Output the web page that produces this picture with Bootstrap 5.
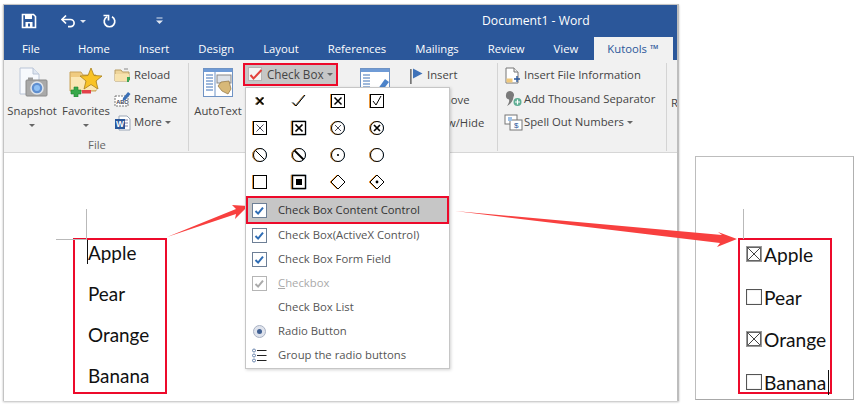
<!DOCTYPE html>
<html lang="en">
<head>
<meta charset="utf-8">
<title>Document1 - Word</title>
<link href="https://cdn.jsdelivr.net/npm/bootstrap@5.3.0/dist/css/bootstrap.min.css" rel="stylesheet">
<style>
html,body{margin:0;background:#fff;overflow:hidden}
body{font-family:"Open Sans","Noto Sans",sans-serif;font-size:11.3px;color:#444}
.stage{position:relative;width:858px;height:406px;overflow:hidden}
.wordwin{width:676px;height:397px;margin:4px 0 0 3px;border:1px solid #c4c4c4;border-right:2px solid #bdbdbd;box-shadow:0 1px 2px #bbb}
.titlebar{height:32px;background:#2b579a;color:#fff}
.qat{width:420px;padding-left:17px}
.qat svg{display:block}
.doc-title{font-size:12.2px;margin-left:58px}
.tabrow{height:23px;background:#2b579a;color:#fff;padding:1px 0 0 18px;gap:29px;font-size:11.3px}
.tab-file{margin-right:9px}
.tab-on{margin:-1px 0 0 -13px;background:#f1f1f1;color:#2b579a;padding:1px 13px 0;height:23px;width:79px;white-space:nowrap}
.ribbon{height:93px;background:#f1f1f1;border-bottom:1px solid #d6d6d6}
.rgroup{height:88px;border-right:1px solid #d4d4d4;margin-top:3px;flex:none}
.bigbtn{width:52px;flex:none;padding-top:4px;text-align:center;line-height:16px}
.bigbtn svg{display:block;margin:0 auto 6px}
.bigbtn .tri{display:block;margin:5px auto 0}
.btn-fav{margin-left:2px}
.tri{display:inline-block;width:0;height:0;border:3px solid transparent;border-top:3.5px solid #666;border-bottom:0;vertical-align:middle;margin-left:3px}
.smallstack{padding-top:1px}
.smallrow{height:23.5px;padding-left:2px;white-space:nowrap}
.smallrow svg{flex:none;margin-right:3px}
.smallrow svg.tight{margin-right:1px}
.group-label{text-align:center;color:#666;line-height:14px;margin-top:3px}
.g-file{width:185px;padding-left:2px}
.g-main{width:309px;padding-left:3px}
.g-kt{width:169px;padding-left:5px}
.chk-out{width:95px;height:23px;background:#c6c6c6;border:2px solid #ed0a2b;padding-left:3px;font-size:11.7px;white-space:nowrap}
.col-cb{width:95px;margin-left:-1px}
.col-big2{margin-left:11px}
.col-ins{margin-left:9px}
.rtail{width:12px;line-height:86px;padding-left:4px;overflow:hidden}
.docarea{height:248px;background:#fff;position:relative;padding:85px 0 0 69px}
.redbox{width:94px;height:156px;border:2px solid #ed0a2b}
.doctext{font-family:"Lato","Open Sans",sans-serif;font-size:18.9px;color:#111;line-height:20px}
.left-list{padding:2.500px 0 0 13px}
.left-list div{height:41.3px}
.caret-mark{position:absolute;background:#111;width:1px}
.crop{position:absolute;background:#b9b9b9}
.pagebox{position:relative;width:159px;height:244px;margin:156px 0 0 16px;border:1px solid #bdbdbd;border-right-color:#b0b0b0;border-bottom-color:#a8a8a8;padding:81px 0 0 42px;background:#fff}
.right-list{padding:5px 0 0 6px;font-size:19.2px}
.right-list div{height:42.6px;display:flex;align-items:flex-start;gap:2px;white-space:nowrap}
.right-list svg{margin-top:1px;flex:none}
.menu-drop{display:block;position:absolute;left:245px;top:87px;width:205px;height:282px;background:#fff;border:1px solid #c6c6c6;border-radius:0;padding:0;margin:0;box-shadow:1px 1px 3px rgba(0,0,0,.18);font-size:11.3px;min-width:0}
.symgrid{display:grid;grid-template-columns:repeat(4,16px);grid-auto-rows:16px;column-gap:23px;row-gap:11px;padding:5px 0 0 6px;height:111px}
.sym{filter:drop-shadow(-.7px 0 0 #e8963a) drop-shadow(.7px 0 0 #4aa3ee)}
.menu-drop .dropdown-item{display:flex;align-items:center;height:24px;padding:0 0 0 6px;gap:11px;color:#555;font-size:11.3px;background:none;width:auto}
.menu-drop .dropdown-item svg{flex:none}
.menu-drop .dropdown-item.picked{height:28px;margin:-3px 0 -1px;background:#c6c6c6;border:2px solid #ed0a2b;padding-left:4px;color:#333}
.menu-drop .dropdown-item.disabled{color:#aaa}
.arrows{position:absolute;left:0;top:0;pointer-events:none}
</style>
</head>
<body>
<svg width="0" height="0" class="position-absolute">
<defs>
<symbol id="cb" viewBox="0 0 15 15"><rect x=".5" y=".5" width="14" height="14" fill="#fff" stroke="#6d7f96"/><path d="M3.5 8l2.6 2.6L11 4.6" fill="none" stroke="#2f6db5" stroke-width="2"/></symbol>
<symbol id="bx" viewBox="0 0 16 16"><rect x="1.5" y="1.5" width="13" height="13" fill="#fff" stroke="#000"/></symbol>
<symbol id="ci" viewBox="0 0 16 16"><circle cx="8" cy="8" r="6.5" fill="#fff" stroke="#000"/></symbol>
</defs>
</svg>
<div class="stage d-flex align-items-start">
  <div class="wordwin flex-none">
    <div class="titlebar d-flex align-items-center">
      <div class="qat d-flex align-items-center">
        <svg width="16" height="16" viewBox="0 0 16 16" class="me-3"><path d="M1.5 1.5h11l2 2v11h-13z" fill="none" stroke="#fff" stroke-width="1.6"/><rect x="4" y="2" width="7" height="4" fill="#fff"/><rect x="4.5" y="9" width="7" height="5" fill="#fff"/><rect x="7" y="10.5" width="2" height="3" fill="#2b579a"/></svg>
        <svg width="15" height="14" viewBox="0 0 15 14" class="ms-2"><path d="M1.500 5.500h8a3.600 3.600 0 0 1 0 7.200H7" fill="none" stroke="#fff" stroke-width="1.700"/><path d="M5 1.500L1 5.500l4 4" fill="none" stroke="#fff" stroke-width="1.700"/></svg>
        <span class="tri ms-1" style="border-top-color:#dfe6f1"></span>
        <svg width="15" height="15" viewBox="0 0 15 15" class="ms-3"><path d="M10 2.800a5.300 5.300 0 1 1-5 0" fill="none" stroke="#fff" stroke-width="1.700"/><path d="M1.500 1.500h5v5" fill="none" stroke="#fff" stroke-width="1.700"/></svg>
        <svg width="9" height="8" viewBox="0 0 9 8" style="margin-left:38px"><path d="M1.500 1h6" stroke="#dfe6f1"/><path d="M1 3.500h7L4.500 7z" fill="#dfe6f1"/></svg>
      </div>
      <div class="doc-title">Document1 - Word</div>
    </div>
    <div class="tabrow d-flex align-items-center">
      <span class="tab-file">File</span><span>Home</span><span>Insert</span><span>Design</span><span>Layout</span><span>References</span><span>Mailings</span><span>Review</span><span>View</span>
      <span class="tab-on d-flex align-items-center">Kutools ™</span>
    </div>
    <div class="ribbon d-flex">
      <div class="rgroup g-file">
        <div class="d-flex" style="height:72px">
          <div class="bigbtn">
            <svg width="32" height="30" viewBox="0 0 32 30"><path d="M4 1h13l6 6v20H4z" fill="#f7f9fd" stroke="#b9c4d6"/><path d="M17 1v6h6" fill="#dfe6f1" stroke="#b9c4d6"/><rect x="10" y="13" width="21" height="16" rx="1" fill="#a9a9a9" stroke="#8a8a8a"/><rect x="12" y="10.500" width="5" height="3" fill="#9a9a9a"/><circle cx="21" cy="21" r="6" fill="#5f8fd0" stroke="#dfe4ea" stroke-width="1.500"/><circle cx="21" cy="21" r="3" fill="#8fc0f4"/></svg>
            Snapshot
            <span class="tri"></span>
          </div>
          <div class="bigbtn btn-fav">
            <svg width="34" height="30" viewBox="0 0 34 30"><path d="M1 5h11l2 3h13v16H1z" fill="#f0cb80" stroke="#c9a45c"/><path d="M2 10h25v13H2z" fill="#fbe7b4"/><path d="M22 1l3 7.500 8 .5-6 5 2 8-7-4.500-7 4.500 2-8-6-5 8-.5z" fill="#f9c326" stroke="#a8801a" stroke-width=".8"/><path d="M5 20h4v3h3v4H9v3H5v-3H2v-4h3z" fill="#38a84a" stroke="#1f7f30" stroke-width=".6"/><rect x="13" y="23" width="9" height="3.500" fill="#e2424a"/></svg>
            Favorites
            <span class="tri"></span>
          </div>
          <div class="d-flex flex-column smallstack">
            <div class="smallrow d-flex align-items-center"><svg width="17" height="15" viewBox="0 0 17 15"><path d="M1 2h6l1.500 2H15v9H1z" fill="#eed59c" stroke="#b99d62"/><path d="M1 6h14v7H1z" fill="#f7e2ad"/><path d="M10 1h4" stroke="#888"/><path d="M13 9h3v3h-1v2h-2z" fill="#3aa655"/></svg>Reload</div>
            <div class="smallrow d-flex align-items-center"><svg width="17" height="16" viewBox="0 0 17 16"><rect x="1" y="5" width="13" height="10" fill="#fff" stroke="#777" stroke-dasharray="2 1"/><text x="2.200" y="13" font-family="Liberation Sans" font-size="5.600" font-weight="700" fill="#445">ABC</text><path d="M9 7l5-6 2.500 2-5 6-3 1z" fill="#3a6fb5"/></svg>Rename</div>
            <div class="smallrow d-flex align-items-center"><svg width="17" height="16" viewBox="0 0 17 16"><path d="M5 1h8l3 3v11H5z" fill="#fff" stroke="#9aa5b5"/><path d="M11 5h3M11 8h3M11 11h3" stroke="#88a" /><rect x="1" y="4" width="10" height="10" fill="#2b579a"/><text x="2" y="12.300" font-family="Liberation Sans" font-size="8.500" font-weight="700" fill="#fff">W</text></svg>More<span class="tri"></span></div>
          </div>
        </div>
        <div class="group-label">File</div>
      </div>
      <div class="rgroup g-main d-flex">
        <div class="bigbtn">
          <svg width="30" height="30" viewBox="0 0 30 30"><rect x=".5" y="1.500" width="29" height="28" fill="#fff" stroke="#6f93c4"/><rect x="1" y="2" width="28" height="3" fill="#6f9bd6"/><path d="M3 8h7M3 11h7M3 14h7M3 17h7M3 20h7M3 23h7" stroke="#3f72b8"/><path d="M12 5v24" stroke="#6f93c4"/><rect x="14" y="8" width="14" height="8" fill="#dfe3e8" stroke="#888"/><path d="M18 15l8-1 2 8-3 5-6-3-4-5z" fill="#d7b878" stroke="#8f7340" stroke-width=".7"/></svg>
          AutoText
        </div>
        <div class="col-cb d-flex flex-column">
          <div class="chk-out d-flex align-items-center"><svg width="15" height="15" viewBox="0 0 15 15" class="me-1"><rect x=".5" y=".5" width="13" height="13" fill="#f4f4f4" stroke="#b5b5b5"/><path d="M2.500 8l3 3.500L13.500 3" fill="none" stroke="#e2413c" stroke-width="2"/></svg>Check Box<span class="tri"></span></div>
        </div>
        <div class="bigbtn col-big2">
          <svg width="30" height="30" viewBox="0 0 30 30"><rect x=".5" y="1.500" width="29" height="28" fill="#fff" stroke="#6f93c4"/><rect x="1" y="2" width="28" height="3" fill="#6f9bd6"/><path d="M3 8h7M3 11h7M3 14h7M3 17h7M3 20h7" stroke="#3f72b8"/><path d="M15 26l10-14 4 3-10 13z" fill="#4c83c9"/></svg>
        </div>
        <div class="col-ins d-flex flex-column smallstack">
          <div class="smallrow d-flex align-items-center" style="padding-left:0"><svg width="14" height="16" viewBox="0 0 14 16"><rect x="0" y="1" width="1.700" height="15" fill="#777"/><path d="M3 .5l9.500 5L3 10.500z" fill="#3f72b8"/></svg>Insert</div>
          <div class="smallrow" style="padding-left:17px;line-height:23.5px">Remove</div>
          <div class="smallrow" style="padding-left:17px;line-height:23.5px">Show/Hide</div>
        </div>
      </div>
      <div class="rgroup g-kt d-flex flex-column smallstack">
        <div class="smallrow d-flex align-items-center"><svg width="16" height="17" viewBox="0 0 16 17"><path d="M1 1h8l4 4v11H1z" fill="#fff" stroke="#777"/><path d="M9 1v4h4" fill="#eee" stroke="#777"/><path d="M1.500 11.500h6v4h-6z" fill="#f0c87a"/><path d="M12 9v6M9 12h6" stroke="#2b579a" stroke-width="1.400"/></svg>Insert File Information</div>
        <div class="smallrow d-flex align-items-center"><svg class="tight" width="18" height="16" viewBox="0 0 18 16"><path d="M1 4a4 4 0 1 1 7.500 2C8 10 6 13 2 15c2-3 2.500-5 2-6.500A4 4 0 0 1 1 4z" fill="#7a7a7a"/><circle cx="12.500" cy="11" r="4" fill="#5fae94"/><path d="M12.500 8.500v5M10 11h5" stroke="#fff" stroke-width="1.200"/></svg>Add Thousand Separator</div>
        <div class="smallrow d-flex align-items-center" style="margin-left:-1px"><svg class="tight" width="19" height="17" viewBox="0 0 19 17"><rect x="1" y="1" width="12" height="9" fill="#fff" stroke="#777"/><rect x="6" y="6" width="12" height="10" fill="#fff" stroke="#777"/><rect x="4" y="3" width="4" height="4" fill="#9cc0e8"/><text x="10" y="14" font-family="Liberation Sans" font-size="8" fill="#2b579a">$</text></svg>Spell Out Numbers<span class="tri"></span></div>
      </div>
      <div class="rtail">R</div>
    </div>
    <div class="docarea">
      <span class="crop" style="left:52px;top:86px;width:31px;height:1px"></span>
      <span class="crop" style="left:82px;top:56px;width:1px;height:30px"></span>
      <div class="redbox doctext left-list">
        <div>Apple</div><div>Pear</div><div>Orange</div><div>Banana</div>
      </div>
      <span class="caret-mark" style="left:83px;top:87px;height:24px"></span>
    </div>
  </div>
  <div class="pagebox">
    <span class="crop" style="left:47px;top:52px;width:1px;height:30px"></span>
    <div class="redbox doctext right-list">
      <div><svg width="16" height="16" viewBox="0 0 15 15"><rect x=".5" y=".5" width="14" height="14" fill="#fff" stroke="#9a9a9a"/><rect x="1.500" y="1.500" width="12" height="12" fill="none" stroke="#333" stroke-width=".7"/><path d="M2 2l11 11M13 2L2 13" stroke="#222" stroke-width=".8"/></svg>Apple</div>
      <div><svg width="16" height="16" viewBox="0 0 15 15"><rect x=".5" y=".5" width="14" height="14" fill="#fff" stroke="#555"/></svg>Pear</div>
      <div><svg width="16" height="16" viewBox="0 0 15 15"><rect x=".5" y=".5" width="14" height="14" fill="#fff" stroke="#9a9a9a"/><rect x="1.500" y="1.500" width="12" height="12" fill="none" stroke="#333" stroke-width=".7"/><path d="M2 2l11 11M13 2L2 13" stroke="#222" stroke-width=".8"/></svg>Orange</div>
      <div><svg width="16" height="16" viewBox="0 0 15 15"><rect x=".5" y=".5" width="14" height="14" fill="#fff" stroke="#555"/></svg>Banana</div>
    </div>
    <span class="caret-mark" style="left:132px;top:213px;height:25px"></span>
  </div>
  <div class="dropdown-menu menu-drop">
    <div class="symgrid">
      <svg class="sym" width="16" height="16" viewBox="0 0 16 16"><path d="M4.500 4.500l7 7M11.500 4.500l-7 7" stroke="#000" stroke-width="1.500"/></svg>
      <svg class="sym" width="16" height="16" viewBox="0 0 16 16"><path d="M2 9.500l3 3.500 9-11" fill="none" stroke="#000"/></svg>
      <svg class="sym" width="16" height="16" viewBox="0 0 16 16"><use href="#bx"/><path d="M4.500 4.500l7 7M11.500 4.500l-7 7" stroke="#000" stroke-width="1.500"/></svg>
      <svg class="sym" width="16" height="16" viewBox="0 0 16 16"><use href="#bx"/><path d="M4 8l3 4 5-9" fill="none" stroke="#000"/></svg>
      <svg class="sym" width="16" height="16" viewBox="0 0 16 16"><use href="#bx"/><path d="M4.500 4.500l7 7M11.500 4.500l-7 7" stroke="#334" stroke-width=".9"/></svg>
      <svg class="sym" width="16" height="16" viewBox="0 0 16 16"><rect x="1.500" y="1.500" width="13" height="13" fill="#fff" stroke="#000" stroke-width="1.300"/><path d="M4.500 4.500l7 7M11.500 4.500l-7 7" stroke="#000" stroke-width="1.700"/></svg>
      <svg class="sym" width="16" height="16" viewBox="0 0 16 16"><use href="#ci"/><path d="M5 5l6 6M11 5l-6 6" stroke="#334" stroke-width=".9"/></svg>
      <svg class="sym" width="16" height="16" viewBox="0 0 16 16"><use href="#ci"/><path d="M5 5l6 6M11 5l-6 6" stroke="#000" stroke-width="1.700"/></svg>
      <svg class="sym" width="16" height="16" viewBox="0 0 16 16"><use href="#ci"/><path d="M3.500 3.500l9 9" stroke="#000"/></svg>
      <svg class="sym" width="16" height="16" viewBox="0 0 16 16"><use href="#ci"/><path d="M3.500 3.500l9 9" stroke="#000" stroke-width="1.800"/></svg>
      <svg class="sym" width="16" height="16" viewBox="0 0 16 16"><use href="#ci"/><circle cx="8" cy="8" r="1.100" fill="#000"/></svg>
      <svg class="sym" width="16" height="16" viewBox="0 0 16 16"><use href="#ci"/></svg>
      <svg class="sym" width="16" height="16" viewBox="0 0 16 16"><use href="#bx"/></svg>
      <svg class="sym" width="16" height="16" viewBox="0 0 16 16"><rect x="1.500" y="1.500" width="13" height="13" fill="#fff" stroke="#000" stroke-width="1.400"/><rect x="5" y="5" width="6" height="6" fill="#000"/></svg>
      <svg class="sym" width="16" height="16" viewBox="0 0 16 16"><path d="M8 1l7 7-7 7-7-7z" fill="#fff" stroke="#000"/></svg>
      <svg class="sym" width="16" height="16" viewBox="0 0 16 16"><path d="M8 1l7 7-7 7-7-7z" fill="#fff" stroke="#000"/><circle cx="8" cy="8" r="1.400" fill="#000"/></svg>
    </div>
    <a class="dropdown-item picked" href="#"><svg width="15" height="15"><use href="#cb"/></svg>Check Box Content Control</a>
    <a class="dropdown-item" href="#"><svg width="15" height="15"><use href="#cb"/></svg>Check Box(ActiveX Control)</a>
    <a class="dropdown-item" href="#"><svg width="15" height="15"><use href="#cb"/></svg>Check Box Form Field</a>
    <a class="dropdown-item disabled" href="#"><svg width="15" height="15" viewBox="0 0 15 15"><rect x=".5" y=".5" width="14" height="14" fill="#fff" stroke="#b5b5b5"/><path d="M3.500 8l2.600 2.600L11 4.600" fill="none" stroke="#aaa" stroke-width="2"/></svg><span><u>C</u>heckbox</span></a>
    <a class="dropdown-item" href="#"><svg width="15" height="15"></svg>Check Box List</a>
    <a class="dropdown-item" href="#"><svg width="15" height="15" viewBox="0 0 15 15"><circle cx="7.500" cy="7.500" r="6" fill="#dfe3ec" stroke="#a9b2c4"/><circle cx="7.500" cy="7.500" r="2.500" fill="#3f5f92"/></svg>Radio Button</a>
    <a class="dropdown-item" href="#"><svg width="15" height="15" viewBox="0 0 15 15"><circle cx="2" cy="2.500" r="1.500" fill="#fff" stroke="#4a6a9a" stroke-width=".8"/><circle cx="2" cy="7.500" r="1.500" fill="#fff" stroke="#4a6a9a" stroke-width=".8"/><circle cx="2" cy="12.500" r="1.500" fill="#fff" stroke="#4a6a9a" stroke-width=".8"/><path d="M5 2.500h9.500M5 7.500h9.500M5 12.500h9.500" stroke="#222" stroke-width="1.200"/></svg>Group the radio buttons</a>
  </div>
  <svg class="arrows" width="858" height="406" viewBox="0 0 858 406">
    <polygon points="167,237 236,209 232,205 248,206 235,219 236,214" fill="#f8403f"/>
    <polygon points="455,211 722,235 718,232 737,239 717,247 720,243" fill="#f8403f"/>
  </svg>
</div>
</body>
</html>
